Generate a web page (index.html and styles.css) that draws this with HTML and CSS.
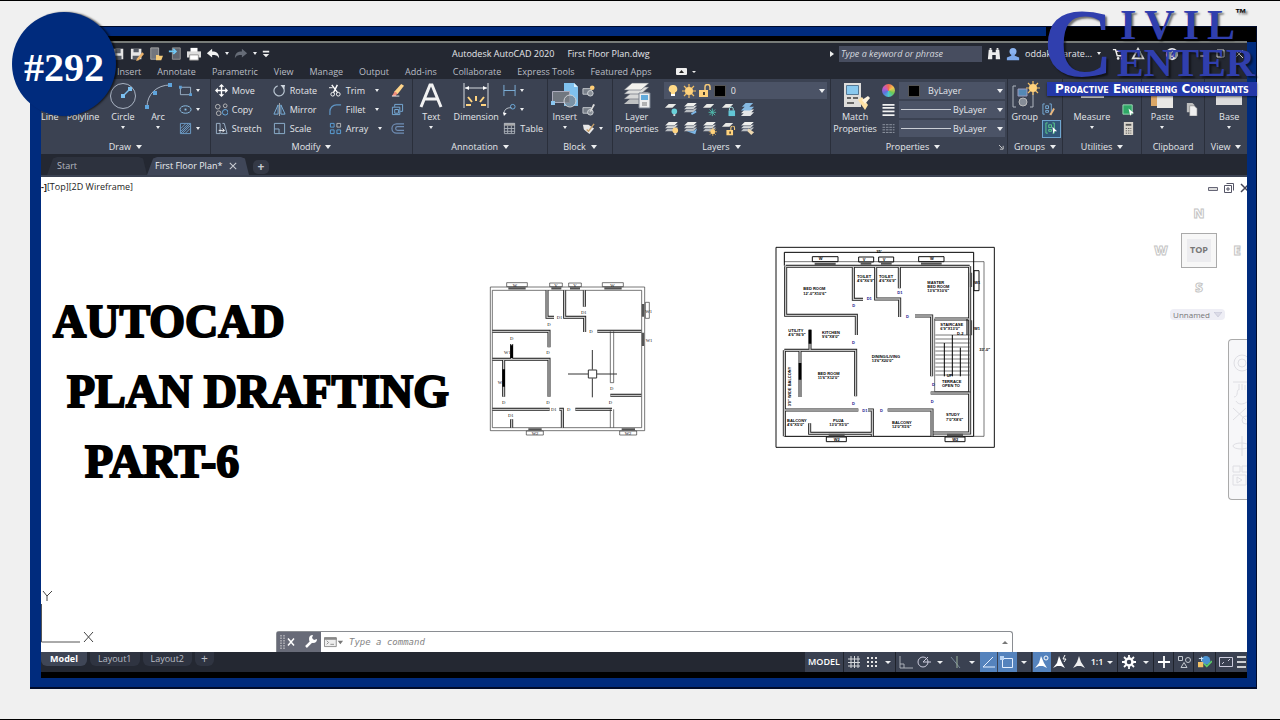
FILE: index.html
```html
<!DOCTYPE html>
<html lang="en">
<head>
<meta charset="utf-8">
<title>AutoCAD Plan Drafting Part-6</title>
<link rel="stylesheet" href="styles.css">
</head>
<body>
<svg class="defs" aria-hidden="true">
  <symbol id="stack" viewBox="0 0 16 16"><path d="M5 7h10l-4 4H1z" fill="#b9bdc2"/><path d="M5 4h10l-4 4H1z" fill="#d4d6d8"/><path d="M5 1h10l-4 4H1z" fill="#efefec"/><path d="M1 5h10l4-4M1 8h10l4-4" fill="none" stroke="#50586a" stroke-width=".7"/></symbol>
  <symbol id="sheet" viewBox="0 0 16 16"><path d="M5 2h8L9 6H1z" fill="#e9e9e6"/></symbol>
  <symbol id="bulb" viewBox="0 0 12 14"><path d="M6 1a4 4 0 0 0-2 7.600V10h4V8.600A4 4 0 0 0 6 1z" fill="#ffd987"/><path d="M4 10h4v2H4z" fill="#fff"/></symbol>
  <symbol id="sun" viewBox="0 0 14 14"><path d="M7 0v14M0 7h14M2 2l10 10M12 2L2 12" stroke="#f3bf65" stroke-width="1.200"/><circle cx="7" cy="7" r="4" fill="#ffd27c"/></symbol>
  <symbol id="lock" viewBox="0 0 14 14"><path d="M7 6V3a2 2 0 0 1 5 0v3" fill="none" stroke="#f3c878" stroke-width="1.500"/><path d="M1 6h9v7H1z" fill="#ffd27c"/><path d="M5 8h2v3H5z" fill="#4a4130"/></symbol>
  <symbol id="insertblk" viewBox="0 0 14 14"><path d="M1 5h9v6H1z" fill="#777e88" stroke="#c7cbd0"/><circle cx="9" cy="10" r="3" fill="#8a9098" stroke="#d5d8db"/></symbol>
  <defs>
    <path id="wa" d="M201 61V142H222M254 61V142H314V186M313 61V110M37 184H207V232M352 184H484M391 376H484M37 268H207V380M71 268V380M95 222V268M37 418H209M238 418H247V473M286 418H396M95 448V473"/>
    <path id="wb" d="M62 94H614M62 94V241H274V300M265 94V193H294M332 94V192H404V246M403 94V160M450 243H500V424M614 94V470M58 346H272V484M58 346V604M105 346V486M135 284V346M58 525H280M309 525H322V604M368 525H501V604M134 565V595H320M497 474H614V594H505M509 252H614"/>
  </defs>
</svg>

<main class="frame">
  <div class="app">
    <header class="titlebar">
      <div class="quick">
        <button class="ib" aria-label="Save"><svg viewBox="0 0 16 16"><path d="M2 2h12v12H2z" fill="#e6e6e6"/><path d="M5 2h6v5H5zM4 10h8v4H4z" fill="#555b66"/></svg></button>
        <button class="ib" aria-label="Save As"><svg viewBox="0 0 16 16"><path d="M1 2h12v12H1z" fill="#e6e6e6"/><path d="M4 2h6v4H4zM3 10h8v4H3z" fill="#555b66"/><path d="M14 6l2 2-6 7-3 1 1-3z" fill="#e9b26b"/></svg></button>
        <button class="ib" aria-label="Open from web"><svg viewBox="0 0 16 16"><path d="M2 1h9v13H2z" fill="#71757d" stroke="#aaa"/><path d="M8 9h3l1 1h4l-2 5H8z" fill="#f5cb78"/></svg></button>
        <button class="ib" aria-label="Save to web"><svg viewBox="0 0 16 16"><path d="M5 1h9v13H5z" fill="#60646d" stroke="#999"/><path d="M1 5h7M6 2l3 3-3 3" fill="none" stroke="#70c8f5" stroke-width="2"/></svg></button>
        <button class="ib" aria-label="Plot"><svg viewBox="0 0 16 16"><path d="M4 1h8v5H4z" fill="#fff"/><path d="M0 5h16v7H0z" fill="#ddd"/><path d="M3 9h10v6H3z" fill="#fff" stroke="#888"/></svg></button>
        <button class="ib" aria-label="Undo"><svg viewBox="0 0 16 16"><path d="M7 2v3c5 0 8 2 8 8-2-4-4-4-8-4v3L1 7z" fill="#f2f2f2"/></svg></button><i class="caret"></i>
        <button class="ib" aria-label="Redo"><svg viewBox="0 0 16 16"><path d="M9 2v3C4 5 1 7 1 13c2-4 4-4 8-4v3l6-5z" fill="#666c77"/></svg></button><i class="caret"></i>
        <button class="ib sm" aria-label="Customize"><svg viewBox="0 0 10 10"><path d="M1 1h8v2H1zM1 5h8L5 9z" fill="#eee"/></svg></button>
      </div>
      <div class="doc-title"><span>Autodesk AutoCAD 2020</span><span>First Floor Plan.dwg</span></div>
      <div class="title-right">
        <i class="caret side"></i>
        <input class="search" type="text" aria-label="Search" placeholder="Type a keyword or phrase">
        <svg class="i14" viewBox="0 0 16 16"><path d="M2 3h4v3h4V3h4l1 11h-5V9H6v5H1z" fill="#eee"/><path d="M3 1h2v2H3zM11 1h2v2h-2z" fill="#eee"/></svg>
        <svg class="i14" viewBox="0 0 16 16"><circle cx="8" cy="5" r="4" fill="#8cb4f0"/><path d="M6 7h4v3l5 2v3H1v-3l5-2z" fill="#7ea9ea"/></svg>
        <span>oddakottarate...</span><i class="caret"></i>
        <svg class="i14 wide" viewBox="0 0 16 16"><path d="M1 3h3l2 7h7l2-5H5" fill="none" stroke="#eee" stroke-width="1.700"/><circle cx="7" cy="13" r="1.500" fill="#eee"/><circle cx="12" cy="13" r="1.500" fill="#eee"/></svg>
        <svg class="i14" viewBox="0 0 16 16"><path d="M8 2l6 11H2z" fill="none" stroke="#ddd" stroke-width="2"/></svg><i class="caret"></i>
        <svg class="i14 wide" viewBox="0 0 16 16"><circle cx="8" cy="8" r="7" fill="#eee"/><path d="M6 6c0-3 5-3 4 0-1 2-2 1-2 4M8 11v2" stroke="#3948a8" stroke-width="2" fill="none"/></svg>
        <span class="winbtns"><svg viewBox="0 0 48 12"><path d="M1 8h9M18 2h7v7h-7zM36 2l8 8M44 2l-8 8" fill="none" stroke="#ccc"/></svg></span>
      </div>
    </header>

    <nav class="menu">
      <a href="#">Insert</a><a href="#">Annotate</a><a href="#">Parametric</a><a href="#">View</a><a href="#">Manage</a><a href="#">Output</a><a href="#">Add-ins</a><a href="#">Collaborate</a><a href="#">Express Tools</a><a href="#">Featured Apps</a>
      <button class="mini" aria-label="Minimize ribbon"><svg viewBox="0 0 20 8"><rect width="11" height="7" rx="1" fill="#eee"/><path d="M3 5h5L5.500 2z" fill="#222"/><path d="M16 3h4l-2 2z" fill="#eee"/></svg></button>
    </nav>

    <section class="ribbon" aria-label="Ribbon">
      <div class="panel p-draw">
        <div class="body">
          <button class="big"><svg class="ico"></svg>Line</button>
          <button class="big"><svg class="ico"></svg>Polyline</button>
          <button class="big"><svg class="ico" viewBox="0 0 30 30"><circle cx="15" cy="15" r="12.500" fill="none" stroke="#a9b3c2"/><path d="M15 15l7-7" stroke="#7cc0f0" stroke-width="1.500"/><path d="M13 13h4v4h-4zM20 6h4v4h-4z" fill="#7cc0f0"/></svg>Circle<i class="caret"></i></button>
          <button class="big"><svg class="ico" viewBox="0 0 30 30"><path d="M4 26C4 13 14 4 27 4" fill="none" stroke="#a9b3c2"/><path d="M2 24h4v4H2zM10 10h4v4h-4zM25 2h4v4h-4z" fill="#5fa4dc"/></svg>Arc<i class="caret"></i></button>
          <div class="rows">
            <button class="tool" aria-label="Rectangle"><svg viewBox="0 0 14 14"><path d="M1.500 3.500h11v8h-11z" fill="none" stroke="#9fb6cc"/><path d="M0 2h3v3H0zM11 10h3v3h-3z" fill="#5c9ed4"/></svg><i class="caret"></i></button>
            <button class="tool" aria-label="Ellipse"><svg viewBox="0 0 14 14"><ellipse cx="7" cy="7" rx="6" ry="4" fill="none" stroke="#8fc4ea"/><path d="M6 6h2v2H6z" fill="#8fc4ea"/></svg><i class="caret"></i></button>
            <button class="tool" aria-label="Hatch"><svg viewBox="0 0 14 14"><path d="M1.500 1.500h11v11h-11zM2 7l5-5M2 12L12 2M7 12l5-5M2 10l8-8M4 12l8-8" fill="none" stroke="#6fa0cc"/></svg><i class="caret"></i></button>
          </div>
        </div>
        <button class="ptitle">Draw <i class="caret lg"></i></button>
      </div>

      <div class="panel p-modify">
        <div class="body">
          <div class="rows">
            <button class="tool"><svg viewBox="0 0 14 14"><path d="M7 1v12M1 7h12" stroke="#fff" stroke-width="1.500"/><path d="M7 0l3 3H4zM7 14l3-3H4zM0 7l3-3v6zM14 7l-3-3v6z" fill="#fff"/></svg>Move</button>
            <button class="tool"><svg viewBox="0 0 14 14"><g fill="none"><circle cx="3" cy="4" r="2.500" stroke="#bbb"/><circle cx="4" cy="11" r="2.500" stroke="#bbb"/><circle cx="11" cy="3" r="2" stroke="#bbb"/><circle cx="11" cy="10" r="3" stroke="#69b0e6"/></g></svg>Copy</button>
            <button class="tool"><svg viewBox="0 0 14 14"><path d="M1.500 1.500h4v11h-4zM8 1.500h2l3 11H6" fill="none" stroke="#9fb6cc"/><path d="M4 9h6M8 7l2 2-2 2" stroke="#fff" fill="none"/></svg>Stretch</button>
          </div>
          <div class="rows">
            <button class="tool"><svg viewBox="0 0 14 14"><path d="M5 2a5.500 5.500 0 1 0 6 2" fill="none" stroke="#b8c4d0" stroke-width="1.300"/><path d="M8 1l5 0-1 5z" fill="#cfd6de"/></svg>Rotate</button>
            <button class="tool"><svg viewBox="0 0 14 14"><path d="M5.500 2v10H1zM8.500 2v10H13z" fill="none" stroke="#7db4e0"/><path d="M7 0v14" stroke="#aaa"/></svg>Mirror</button>
            <button class="tool"><svg viewBox="0 0 14 14"><path d="M1.500 1.500h11v11h-11zM1.500 7.500h5v5" fill="none" stroke="#8fb2d0"/></svg>Scale</button>
          </div>
          <div class="rows">
            <button class="tool"><svg viewBox="0 0 14 14"><path d="M3 1l6 8M9 1L5 9" stroke="#fff" stroke-width="1.500"/><circle cx="4" cy="11" r="2" stroke="#fff" fill="none"/><circle cx="10" cy="11" r="2" stroke="#fff" fill="none"/><path d="M0 4h4" stroke="#fff"/></svg>Trim<i class="caret push"></i></button>
            <button class="tool"><svg viewBox="0 0 14 14"><path d="M1 13V9a7 7 0 0 1 7-7h5" fill="none" stroke="#5f95c4" stroke-width="1.300"/></svg>Fillet<i class="caret push"></i></button>
            <button class="tool"><svg viewBox="0 0 14 14"><path d="M1.500 1.500h4v4h-4zM1.500 8.500h4v4h-4zM8.500 8.500h4v4h-4z" fill="none" stroke="#5da3dc"/><path d="M8.500 1.500h4v4h-4z" fill="none" stroke="#bbb"/></svg>Array<i class="caret push"></i></button>
          </div>
          <div class="rows">
            <button class="tool" aria-label="Erase"><svg viewBox="0 0 14 14"><path d="M11 0l3 2-7 9-4-2z" fill="#ffd58b"/><path d="M4 8l3 2-2 3H1z" fill="#ef8c7c"/><path d="M1 13h8" stroke="#eee"/></svg></button>
            <button class="tool" aria-label="Explode"><svg viewBox="0 0 14 14"><path d="M1.500 4.500h8v8h-8zM4 4V1.500h8.500V9H10M4 7h4v4H4z" fill="none" stroke="#78addb"/></svg></button>
            <button class="tool" aria-label="Offset"><svg viewBox="0 0 14 14"><path d="M14 2H6a5 5 0 0 0 0 10h8M14 5H7a2 2 0 0 0 0 4h7" fill="none" stroke="#6f8db4" stroke-width="1.300"/></svg></button>
          </div>
        </div>
        <button class="ptitle">Modify <i class="caret lg"></i></button>
      </div>

      <div class="panel p-annot">
        <div class="body">
          <button class="big"><svg class="ico" viewBox="0 0 30 30"><path d="M5 26l9-22h2l9 22M9 18h12" fill="none" stroke="#f2f2f2" stroke-width="3"/></svg>Text<i class="caret"></i></button>
          <button class="big"><svg class="ico" viewBox="0 0 30 30"><path d="M3 2v25M27 2v25M4 7h22" stroke="#d5d9de" fill="none"/><path d="M4 7l4-2v4zM26 7l-4-2v4z" fill="#fff"/><path d="M15 20v-5M11 21l-4-5M19 21l4-5M10 24H5M20 24h5" stroke="#ffd480" stroke-width="2"/></svg>Dimension</button>
          <div class="rows">
            <button class="tool" aria-label="Linear"><svg viewBox="0 0 14 14"><path d="M1 1v12M13 1v12M1 7h12" stroke="#7fb4df" fill="none"/></svg><i class="caret"></i></button>
            <button class="tool" aria-label="Leader"><svg viewBox="0 0 14 14"><path d="M1 12c0-5 3-7 8-7" stroke="#c4cbd3" fill="none"/><circle cx="10.500" cy="4" r="2.500" stroke="#6eaee0" fill="none"/><path d="M0 10l1 4 3-3z" fill="#fff"/></svg><i class="caret"></i></button>
            <button class="tool"><svg viewBox="0 0 14 14"><path d="M1 1h12v3H1z" fill="#aaa"/><path d="M1.500 1.500h11v11h-11zM5 4v8M9 4v8M1 7h12M1 10h12" stroke="#aab0b8" fill="none"/></svg>Table</button>
          </div>
        </div>
        <button class="ptitle">Annotation <i class="caret lg"></i></button>
      </div>

      <div class="panel p-block">
        <div class="body">
          <button class="big"><svg class="ico" viewBox="0 0 30 30"><path d="M14 2h10l4 4v19H14z" fill="#7fc1ee"/><path d="M24 2v4h4z" fill="#d7effd"/><path d="M2.500 10.500h17v11h-17z" fill="#717780" stroke="#aab"/><circle cx="20" cy="20" r="6" fill="#777d86b0" stroke="#d0d4d8"/><path d="M1 20h4v4H1z" fill="#8cc7f0"/></svg>Insert<i class="caret"></i></button>
          <div class="rows">
            <button class="tool" aria-label="Create block"><svg viewBox="0 0 14 14"><use href="#insertblk"/><circle cx="11" cy="4" r="2.500" fill="#ffce77"/></svg></button>
            <button class="tool" aria-label="Edit block"><svg viewBox="0 0 14 14"><use href="#insertblk"/><path d="M12 1l2 1-4 7-2 1z" fill="#ddd"/></svg></button>
            <button class="tool" aria-label="Edit attributes"><svg viewBox="0 0 14 14"><path d="M1 3h6l6 4-5 6-6-5z" fill="#e8e8e8"/><path d="M5 8l2 2 6-8" stroke="#c79f68" stroke-width="1.500" fill="none"/></svg><i class="caret"></i></button>
          </div>
        </div>
        <button class="ptitle">Block <i class="caret lg"></i></button>
      </div>

      <div class="panel p-layers">
        <div class="body">
          <button class="big"><svg class="ico" viewBox="0 0 30 30"><path d="M10 16h17l-8 7H2z" fill="#bfc1c2"/><path d="M10 11h17l-8 7H2z" fill="#d7d8d8" stroke="#59606c" stroke-width=".6"/><path d="M10 6h17l-8 7H2z" fill="#dedfde" stroke="#59606c" stroke-width=".6"/><path d="M10 2h17l-8 7H2z" fill="#f3f2ee" stroke="#59606c" stroke-width=".6"/><path d="M17 12h11v15H17z" fill="#eee" stroke="#78808d"/><path d="M19 14h7v5h-7z" fill="#63abdc"/><path d="M20 22h5M20 24h5" stroke="#777"/></svg>Layer<br>Properties</button>
          <div class="rows">
            <div class="combo"><svg class="i14" viewBox="0 0 12 14"><use href="#bulb"/></svg><svg class="i14" viewBox="0 0 14 14"><use href="#sun"/></svg><svg class="i14" viewBox="0 0 14 14"><use href="#lock"/></svg><i class="swatch"></i><select aria-label="Layer"><option>0</option></select><i class="caret lg"></i></div>
            <div class="icons">
              <svg viewBox="0 0 16 16"><use href="#sheet"/><circle cx="11" cy="10" r="3" fill="#6ad1d9"/><path d="M10 13h2v2h-2z" fill="#ddd"/></svg>
              <svg viewBox="0 0 16 16"><use href="#stack"/><path d="M9 13l5-3" stroke="#7db8e8" stroke-width="2"/></svg>
              <svg viewBox="0 0 16 16"><use href="#sheet"/><path d="M11 7v8M7 11h8M8 8l6 6M14 8l-6 6" stroke="#4fb7ab"/></svg>
              <svg viewBox="0 0 16 16"><use href="#sheet"/><path d="M8 9h7v6H8z" fill="#62c6d6"/><path d="M9 9V7c0-2 4-2 4 0v2" stroke="#aee" fill="none"/></svg>
              <svg viewBox="0 0 16 16"><path d="M5 8h10l-4 4H1zM5 11h10l-4 4H1z" fill="#e4e5e6"/><path d="M6 1h8l-4 4H2zM5 5h10l-4 4H1z" fill="#86b9e2"/></svg>
            </div>
            <div class="icons">
              <svg viewBox="0 0 16 16"><use href="#stack"/><circle cx="12" cy="10" r="3" fill="#ffd480"/><path d="M11 13h2v2h-2z" fill="#ddd"/></svg>
              <svg viewBox="0 0 16 16"><use href="#stack"/><path d="M4 11h7l4-3-2 6z" fill="#7db8e8"/></svg>
              <svg viewBox="0 0 16 16"><use href="#stack"/><use href="#sun" x="7" y="7" width="9" height="9"/></svg>
              <svg viewBox="0 0 16 16"><use href="#sheet"/><use href="#lock" x="5" y="5" width="11" height="11"/></svg>
              <svg viewBox="0 0 16 16"><use href="#stack"/><path d="M9 8l6 4-3 3-4-4z" fill="#ecd7b0"/></svg>
            </div>
          </div>
        </div>
        <button class="ptitle">Layers <i class="caret lg"></i></button>
      </div>

      <div class="panel p-props">
        <div class="body">
          <button class="big"><svg class="ico" viewBox="0 0 30 30"><path d="M4 2h17v24H4z" fill="#dedddb"/><path d="M6.500 4.500h12v9h-12z" fill="#89c9ef" stroke="#557996"/><path d="M7 17h4M7 22h7M13 17h5" stroke="#666" stroke-width="2"/><path d="M18 19l4-3 6 8-3 5z" fill="#ffe2a5"/><path d="M22 19l6-4 2 2-5 6z" fill="#fff4df"/></svg>Match<br>Properties</button>
          <div class="rows prop-icons">
            <i class="wheel"></i>
            <svg viewBox="0 0 14 14"><path d="M0 1h14M0 4.500h14M0 8.500h14M0 13h14" stroke="#f0f0f0" stroke-width="2"/></svg>
            <svg viewBox="0 0 14 14"><path d="M0 2h14M0 5h14M0 8h14M0 11h14" stroke="#9ca3ae" stroke-dasharray="3 1"/></svg>
          </div>
          <div class="rows combos">
            <div class="combo"><i class="swatch"></i><select aria-label="Object color"><option>ByLayer</option></select><i class="caret lg"></i></div>
            <div class="combo"><i class="rule"></i><select aria-label="Lineweight"><option>ByLayer</option></select><i class="caret lg"></i></div>
            <div class="combo"><i class="rule"></i><select aria-label="Linetype"><option>ByLayer</option></select><i class="caret lg"></i></div>
          </div>
        </div>
        <button class="ptitle shifted">Properties <i class="caret lg"></i><svg class="launch" viewBox="0 0 6 6"><path d="M0 0l4 4M5 1v4H1" stroke="#ddd" fill="none"/></svg></button>
      </div>

      <div class="panel p-groups">
        <div class="body">
          <button class="big"><svg class="ico" viewBox="0 0 30 30"><path d="M6 5H3v21h3M20 5h3v21h-3" fill="none" stroke="#aeb4bd"/><path d="M8 8h9v7H8z" fill="#5489b5" stroke="#99b"/><circle cx="13" cy="21" r="4" fill="#858c96" stroke="#bbb"/><use href="#sun" x="16" y="0" width="14" height="14"/></svg>Group</button>
          <div class="rows">
            <button class="tool" aria-label="Ungroup"></button>
            <button class="tool" aria-label="Group edit"><svg viewBox="0 0 14 14"><path d="M3 1H1v11h2M8 1h2v11H8M4 3h3v3H4zM4 8h3v2H4z" fill="none" stroke="#7ab0dc"/><path d="M13 6l-4 7" stroke="#eab87e" stroke-width="2"/></svg></button>
            <button class="tool on" aria-label="Group selection"><svg viewBox="0 0 14 14"><path d="M3 1H1v11h2M8 1h2v11H8M4 3h3v3H4zM4 8h3v2H4z" fill="none" stroke="#5fd08e"/><path d="M8 5l5 5-3 0-1 3z" fill="#fff"/></svg></button>
          </div>
        </div>
        <button class="ptitle">Groups <i class="caret lg"></i></button>
      </div>

      <div class="panel p-utils">
        <div class="body">
          <button class="big"><svg class="ico" viewBox="0 0 30 30"><path d="M4 8h23v9H4z" fill="#d6d6d6"/></svg>Measure<i class="caret"></i></button>
          <div class="rows">
            <button class="tool" aria-label="Quick select"></button>
            <button class="tool" aria-label="Select all"><svg viewBox="0 0 14 14"><path d="M1 2h10v10H1z" fill="#2fa866" stroke="#9fe0b8"/><path d="M7 6l6 5-3 0-1 3z" fill="#fff"/></svg></button>
            <button class="tool" aria-label="Calculator"><svg viewBox="0 0 14 14"><path d="M2 0h10v14H2z" fill="#d8d4cc"/><path d="M4 2h6v2H4z" fill="#555"/><path d="M4 7h6M4 9.500h6M4 12h6" stroke="#555" stroke-dasharray="1.500 1"/></svg></button>
          </div>
        </div>
        <button class="ptitle">Utilities <i class="caret lg"></i></button>
      </div>

      <div class="panel p-clip">
        <div class="body">
          <button class="big"><svg class="ico" viewBox="0 0 30 30"><path d="M4 5h16v20H4z" fill="#dba766"/><path d="M10 12h16v15H10z" fill="#e9e7e4"/></svg>Paste<i class="caret"></i></button>
          <div class="rows">
            <button class="tool" aria-label="Cut"></button>
            <button class="tool" aria-label="Copy clip"><svg viewBox="0 0 14 14"><path d="M2 0h6l2 2v8H2z" fill="#bdbdbd"/><path d="M5 3h5l3 3v8H5z" fill="#f0f0f0" stroke="#777" stroke-width=".6"/></svg></button>
          </div>
        </div>
        <span class="ptitle">Clipboard</span>
      </div>

      <div class="panel p-view">
        <div class="body"><button class="big"><svg class="ico" viewBox="0 0 30 30"><path d="M2 8h26v16H2z" fill="#dcdcdc"/></svg>Base<i class="caret"></i></button></div>
        <button class="ptitle">View <i class="caret lg"></i></button>
      </div>
    </section>

    <nav class="files">
      <a class="file" href="#">Start</a>
      <a class="file active" href="#">First Floor Plan* <svg viewBox="0 0 10 10"><path d="M1 1l8 8M9 1L1 9" stroke="#c9ccd2" stroke-width="1.300"/></svg></a>
      <button class="plus" aria-label="New tab">+</button>
    </nav>

    <section class="canvas">
      <div class="viewlabel"><b>-]</b>[Top][2D Wireframe]</div>
      <h1 class="heading"><span>AUTOCAD</span><span>PLAN DRAFTING</span><span>PART-6</span></h1>

      <svg class="plan plan-a" viewBox="0 0 540 525" role="img" aria-label="Plan outline with crosshair">
        <path d="M31 51H494V482H31zM37 61H485V473H37z" class="ln"/>
        <use href="#wa" class="wall"/><use href="#wa" class="core"/>
        <path d="M391 184V338H401V184M391 418V473M401 418V473" class="ln"/>
        <path d="M80 38h62v12H80zM209 39h38v11h-38zM266 39h38v11h-38zM367 38h63v12h-63zM496 97h12v48h-12zM139 483h51v12h-51zM419 483h51v12h-51z" class="ln"/>
        <path d="M85 55h52M214 55h30M270 55h30M373 55h52M489 102v38M489 188v40M145 478h40M425 478h40" class="glass"/>
        <path d="M71 298v52M95 226v38" class="dark"/>
        <path d="M264 312h60M351 312h60M337 240v59M337 325v57" class="cross"/><path d="M325 300h25v24h-25z" class="ln box"/>
        <g class="tag"><text x="98" y="50">W</text><text x="223" y="50">V</text><text x="280" y="50">V</text><text x="391" y="50">W</text><text x="496" y="130">W1</text><text x="497" y="215">W1</text><text x="155" y="495">W2</text><text x="434" y="495">W2</text><text x="202" y="168">D</text><text x="230" y="148">D1</text><text x="303" y="131">D1</text><text x="328" y="190">D</text><text x="90" y="211">D</text><text x="72" y="252">W1</text><text x="199" y="251">D</text><text x="53" y="341">W</text><text x="66" y="403">D</text><text x="199" y="403">D</text><text x="390" y="360">D</text><text x="386" y="403">D</text><text x="261" y="424">D</text><text x="213" y="424">D1</text><text x="84" y="441">D1</text></g>
      </svg>

      <svg class="plan plan-b" viewBox="0 0 720 660" role="img" aria-label="Dimensioned first floor plan">
        <path d="M33 37H688V637H33z" class="edge"/>
        <path d="M58 80H657V604H626" class="ln"/>
        <path d="M58 92V52H626V604H58" class="dark2"/>
        <use href="#wb" class="wall"/><use href="#wb" class="core"/>
        <path d="M509 252V470H614M511 300H614M511 312H614M511 324H614M511 336H614M511 348H614M511 360H614M511 372H614M511 384H614M511 396H614M511 408H614M511 420H614" class="ln"/>
        <path d="M538 324v100M562 300v124M586 338v86M606 252v48" class="dark2"/>
        <path d="M142 65h77v15h-77zM281 66h45v15h-45zM341 66h45v15h-45zM461 65h76v15h-76zM627 107h15v60h-15zM184 606h60v14h-60zM540 606h60v14h-60z" class="edge"/>
        <path d="M149 87h63M287 86h32M348 86h32M468 86h62M618 113v43M618 256v45M191 600h48M546 600h48" class="glass"/>
        <path d="M105 384v50M135 284v42" class="dark"/>
        <g class="room"><text x="115" y="166">BED ROOM</text><text x="115" y="179">12'-0"X10'6"</text><text x="276" y="129">TOILET</text><text x="276" y="141">4'6"X6'9"</text><text x="342" y="129">TOILET</text><text x="342" y="141">4'6"X6'9"</text><text x="487" y="147">MASTER</text><text x="487" y="160">BED ROOM</text><text x="487" y="172">13'6"X10'6"</text><text x="70" y="291">UTILITY</text><text x="70" y="304">4'6"X6'9"</text><text x="171" y="296">KITCHEN</text><text x="171" y="308">9'6"X8'0"</text><text x="526" y="274">STAIRCASE</text><text x="526" y="286">6'9"X13'0"</text><text x="320" y="369">DINING/LIVING</text><text x="320" y="382">13'6"X20'0"</text><text x="158" y="419">BED ROOM</text><text x="158" y="433">11'6"X12'0"</text><text x="543" y="544">STUDY</text><text x="543" y="557">7'0"X8'6"</text><text x="531" y="444">TERRACE</text><text x="531" y="456">OPEN TO</text><text x="66" y="560">BALCONY</text><text x="66" y="573">4'6"X5'0"</text><text x="204" y="560">PUJA</text><text x="193" y="573">13'0"X5'0"</text><text x="381" y="567">BALCONY</text><text x="381" y="580">12'0"X5'6"</text><text x="643" y="347">33'-0"</text><text x="334" y="54">35'</text><text transform="translate(78 514) rotate(-90)">3'0" WIDE BALCONY</text><text x="161" y="76">W</text><text x="293" y="77">V</text><text x="353" y="77">V</text><text x="495" y="76">W</text><text x="628" y="147">W1</text><text x="627" y="286">W1</text><text x="206" y="618">W2</text><text x="562" y="618">W2</text><text x="576" y="299">D-2</text><text x="545" y="425">UP</text></g>
        <g class="door"><text x="262" y="215">D</text><text x="305" y="195">D1</text><text x="397" y="177">D1</text><text x="423" y="248">D</text><text x="261" y="328">D</text><text x="261" y="510">D</text><text x="501" y="453">D</text><text x="497" y="503">D</text><text x="292" y="530">D1</text><text x="345" y="531">D</text></g>
      </svg>

      <svg class="winctl" viewBox="0 0 40 12"><path d="M1.500 5.500h9v3h-9z" fill="#ddd" stroke="#667"/><path d="M19.500 1.500h7v7M17.500 3.500h7v7h-7zM20 6h2v2h-2z" fill="none" stroke="#556"/><path d="M34 2l8 8M42 2l-8 8" stroke="#445" stroke-width="1.500"/></svg>
      <div class="cube"><b class="n">N</b><b class="w">W</b><button>TOP</button><b class="e">E</b><b class="s">S</b></div>
      <button class="ucs-name">Unnamed <svg viewBox="0 0 8 5"><path d="M0 0h8L4 5z" fill="#dcdce8" stroke="#bbc" stroke-width=".5"/></svg></button>
      <div class="navbar"><svg viewBox="0 0 20 162"><g fill="none" stroke="#dedee3"><circle cx="13" cy="23" r="8"/><circle cx="13" cy="23" r="4"/><path d="M4 42h16M5 57c5 0 2-9 5-7v-6M13 44v6M16 45v5M7 61c2 4 8 4 12 0M4 68l13 12M17 68L4 80"/><circle cx="17" cy="80" r="4"/><ellipse cx="12" cy="106" rx="8" ry="3"/><path d="M13 96v20M4 126h7v6H4zM13 126h7v6h-7zM4 135h13v10H4zM8 137l5 3-5 3z"/></g></svg></div>
      <svg class="ucs" viewBox="0 0 54 54"><path d="M.5 15V53H39" fill="none" stroke="#555"/><path d="M2 2l4 5 5-5M6 7v5M43 43l9 10M52 43l-9 10" fill="none" stroke="#444"/></svg>

      <form class="command">
        <span class="grip"><svg viewBox="0 0 44 20"><path d="M4 3v14M7 3v14" stroke="#ddd" stroke-dasharray="1.500 1"/><path d="M11 6.500l6 7M17 6.500l-6 7" stroke="#fff" stroke-width="1.500"/><path d="M29 15l7-7" stroke="#fff" stroke-width="2.500"/><path d="M40 7a4 4 0 1 1-4-4l-1 3 2 2z" fill="#fff"/></svg></span>
        <svg class="prompt" viewBox="0 0 22 14"><path d="M.5 1.500h13v10H.5z" fill="#eee" stroke="#888"/><path d="M0 3h14" stroke="#888" stroke-width="2"/><path d="M3 5l2 2-2 2M7 9h4" stroke="#888" fill="none"/><path d="M15 5h6l-3 4z" fill="#777"/></svg>
        <input type="text" aria-label="Command" placeholder="Type a command">
        <i class="up"></i>
      </form>
    </section>

    <footer class="status">
      <nav class="layouts"><a class="cur" href="#">Model</a><a href="#">Layout1</a><a href="#">Layout2</a><button aria-label="New layout">+</button></nav>
      <div class="cells">
        <button class="w38">MODEL</button>
        <button class="w20 gap" aria-label="Grid"><svg viewBox="0 0 14 14"><path d="M4 1v12M7.500 1v12M11 1v12M1 4h12M1 7.500h12M1 11h12" stroke="#d5d8dc"/></svg></button>
        <button class="w18" aria-label="Snap"><svg viewBox="0 0 14 14"><path d="M2 3h12M2 7h12M2 11h12" stroke="#e5e5e5" stroke-width="2" stroke-dasharray="2 2"/></svg></button>
        <i class="caret"></i>
        <button class="w20 gap" aria-label="Ortho"><svg viewBox="0 0 14 14"><path d="M1 1v12h13M1 9h4v4" stroke="#aab0b8" fill="none"/></svg></button>
        <button class="w18" aria-label="Polar"><svg viewBox="0 0 14 14"><circle cx="6" cy="7" r="5" stroke="#ccd" fill="none"/><path d="M6 7h8M6 7l5-5" stroke="#ccd"/></svg></button>
        <i class="caret"></i>
        <button class="w18" aria-label="Isodraft"><svg viewBox="0 0 14 14"><path d="M2 2l9 11" stroke="#789"/><path d="M8 1v12" stroke="#9cb49c"/></svg></button>
        <i class="caret"></i>
        <button class="w18 on" aria-label="Object snap tracking"><svg viewBox="0 0 14 14"><path d="M12 2L2 12h12" stroke="#e4efff" fill="none"/></svg></button>
        <button class="w20 on" aria-label="Object snap"><svg viewBox="0 0 14 14"><path d="M2.500 3.500h10v9h-10z" stroke="#e4efff" fill="none"/><path d="M0 1h4v4H0z" fill="#b9d4f4"/></svg></button>
        <i class="caret"></i>
        <button class="w20 on gap" aria-label="Annotation visibility"><svg viewBox="0 0 14 14"><path d="M6 1l3 7 3 5-4-2H4l-4 2 4-5z" fill="#fff"/><circle cx="11" cy="3" r="2" stroke="#fff" fill="none"/></svg></button>
        <button class="w18" aria-label="Auto scale"><svg viewBox="0 0 14 14"><path d="M6 1l3 7 3 5-4-2H4l-4 2 4-5z" fill="#fff"/><path d="M12 0l-2 4h3l-2 3" stroke="#fff" fill="none"/></svg></button>
        <button class="w20" aria-label="Annotation scale"><svg viewBox="0 0 14 14"><path d="M7 1l2 6 4 6-4-2H5l-4 2 4-6z" fill="#eee"/></svg></button>
        <button class="w12 ratio">1:1</button><i class="caret"></i>
        <button class="w22 gap" aria-label="Workspace"><svg viewBox="0 0 14 14"><circle cx="7" cy="7" r="3.500" fill="none" stroke="#fff" stroke-width="2.500"/><path d="M7 0v3M7 11v3M0 7h3M11 7h3M2 2l2 2M10 10l2 2M12 2l-2 2M2 12l2-2" stroke="#fff" stroke-width="1.800"/></svg></button>
        <i class="caret"></i>
        <button class="w20 gap" aria-label="Monitor"><svg viewBox="0 0 14 14"><path d="M7 1v12M1 7h12" stroke="#fff" stroke-width="1.800"/></svg></button>
        <button class="w20 gap" aria-label="Isolate"><svg viewBox="0 0 14 14"><path d="M1.500 1.500h4v4h-4zM7 7.500l3 5H4z" fill="none" stroke="#c3c8ce"/><circle cx="11" cy="5" r="2.500" fill="none" stroke="#c3c8ce"/></svg></button>
        <button class="w22 gap" aria-label="Hardware"><svg viewBox="0 0 16 14"><circle cx="9" cy="5" r="5" fill="#4b93d2"/><path d="M0 7h6v6H0z" fill="#f2c266"/><path d="M7 9l3 3 6-6" stroke="#5bcf6a" stroke-width="2" fill="none"/><path d="M4 1v5M1 3h5" stroke="#d7edff"/></svg></button>
        <button class="w20 gap" aria-label="Clean screen"><svg viewBox="0 0 14 14"><path d="M.5 2.500h13v9H.5zM3 9l2-2M9 6l2-2" fill="none" stroke="#ccd"/></svg></button>
        <button class="w12" aria-label="Customization"><svg viewBox="0 0 10 14"><path d="M1 2h9M1 7h9M1 12h9" stroke="#fff" stroke-width="1.500"/></svg></button>
      </div>
    </footer>
  </div>
</main>

<div class="badge">#292</div>
<div class="logo">
  <div class="logo-top"><span class="logo-c">C</span>
    <div class="logo-words"><div class="ivil"><span>I</span><span>V</span><span>I</span><span>L</span><sup>™</sup></div><div class="enter">ENTER</div></div>
  </div>
  <div class="strap">Proactive Engineering Consultants</div>
</div>
</body>
</html>
```
FILE: styles.css
```css
*{box-sizing:border-box}
body{margin:0;min-height:100vh;display:flex;flex-direction:column;position:relative;background:#f0f0f0;border-top:1px solid #000;border-bottom:1px solid #000;font:9px/12px "Open Sans","Noto Sans",sans-serif;color:#e4e6ea;overflow-x:hidden}
button,input,select{font:inherit;color:inherit;background:none;border:0;padding:0;margin:0;border-radius:0}
a{color:inherit;text-decoration:none}
svg{display:block;flex:none}
.defs{position:absolute;width:0;height:0}
.frame{flex:1;display:flex;margin:25px 23px 30px 30px;background:linear-gradient(#000,#000) top right/210px 15px no-repeat #002b7d;border:1px solid #000b2b;border-left-width:0;border-bottom-width:2px;padding:9px 9px 9px 11px}
.app{flex:1;min-width:0;display:flex;flex-direction:column;border-top:5px solid #000;border-bottom:6px solid #000;background:#242832;overflow:hidden}
.caret{display:inline-block;flex:none;border:2px solid transparent;border-top:3px solid #eceef0;border-bottom:0}
.caret.lg{border-width:4px 3px 0}
.caret.side{border:3px solid transparent;border-left:4px solid #eee;border-right:0}
.caret.push{margin-left:6px}
.i14{width:14px;height:14px}

.titlebar{display:grid;grid-template-columns:411fr 378fr 417fr;align-items:center;height:23px;border-top:2px solid #777b78}
.quick{display:flex;align-items:center;gap:5px;padding-left:70px}
.ib svg{width:14px;height:14px}
.ib.sm svg{width:8px;height:8px}
.doc-title{display:flex;gap:13px;white-space:nowrap}
.title-right{display:flex;align-items:center;gap:5px;white-space:nowrap;min-width:0}
.search{width:143px;height:16px;background:#474d5f;padding:0 2px;font-style:italic}
.search::placeholder{color:#d5d8de;opacity:1}
.title-right .wide{margin-left:6px}
.winbtns{margin-left:auto}
.winbtns svg{width:48px;height:12px}

.menu{display:flex;align-items:center;gap:16px;height:15px;padding-left:76px;color:#b9bdc5;white-space:nowrap}
.mini{margin-left:9px}
.mini svg{width:20px;height:8px}

.ribbon{display:flex;height:75px;background:#3b4252;overflow:hidden}
.panel{display:flex;flex-direction:column;min-width:0;border-right:1px solid #2a2f3b;white-space:nowrap}
.body{display:grid;height:61px;padding-top:2px}
.p-draw{flex:170 1 0}.p-modify{flex:203 1 0}.p-annot{flex:135 1 0}.p-block{flex:64 1 0}.p-layers{flex:219 1 0}
.p-props{flex:177 1 0}.p-groups{flex:55 1 0}.p-utils{flex:78 1 0}.p-clip{flex:63 1 0}.p-view{flex:42 1 0;border-right:0}
.p-draw .body{grid-template-columns:16px 52px 28px 42px 1fr}
.p-modify .body{grid-template-columns:58px 56px 62px 1fr;padding-left:4px}
.p-annot .body{grid-template-columns:36px 48px 1fr;column-gap:3px}
.p-block .body{grid-template-columns:33px 1fr;column-gap:1px}
.p-layers .body{grid-template-columns:48px 1fr;column-gap:3px;padding-right:3px}
.p-props .body{grid-template-columns:48px 14px 1fr;column-gap:2px;padding-right:2px}
.p-groups .body{grid-template-columns:34px 1fr}
.p-utils .body{grid-template-columns:57px 1fr;column-gap:2px}
.p-clip .body{grid-template-columns:41px 1fr;column-gap:2px}
.p-view .body{grid-template-columns:1fr;padding-left:6px}
.big{display:flex;flex-direction:column;align-items:center;align-self:start;min-width:0;line-height:12px}
.ico{width:30px;height:30px}
.big .caret{margin-top:3px}
.p-draw .big:first-child{align-items:flex-start}
.rows{display:grid;grid-template-rows:repeat(3,19px);align-items:center;min-width:0}
.tool{display:flex;align-items:center;gap:4px;height:18px}
.tool svg{width:13px;height:13px}
.tool.on{background:#31577a;border:1px solid #6fa6d0;width:19px;justify-content:center}
.ptitle{display:flex;align-items:center;justify-content:center;gap:5px;height:14px;width:100%;position:relative}
.ptitle.shifted{padding-right:12px}
.launch{position:absolute;right:3px;width:5px;height:5px}
.combo{display:flex;align-items:center;gap:2px;height:17px;padding:0 2px;background:#4b5366;min-width:0}
.combo select{flex:1;min-width:0;appearance:none;padding-left:3px}
.swatch{width:12px;height:12px;background:#000;border:1px solid #555;flex:none}
.icons{display:flex;gap:4px}
.icons svg{width:15px;height:15px}
.prop-icons{justify-items:center}
.prop-icons svg{width:13px;height:12px}
.wheel{width:13px;height:13px;border-radius:50%;background:conic-gradient(#f06a50,#f4c64f,#69ca56,#4cc7cf,#5b70df,#c559c6,#f06a50)}
.combos .swatch{margin-left:7px}
.combos .combo:first-child select{padding-left:6px}
.combos{padding-left:2px}
.rule{width:50px;height:1px;background:#c9cdd4;flex:none}
.combos .rule+select{padding-left:0}

.files{display:flex;align-items:flex-end;height:23px;padding-left:6px;border-bottom:2px solid #3b4252}
.file{display:flex;align-items:center;justify-content:space-between;width:100px;height:18px;padding:0 10px;background:#2d323e;color:#b4b8c0;clip-path:polygon(0 100%,6% 8%,10% 0,92% 0,96% 8%,100% 100%)}
.file.active{background:#3f4658;color:#eceef1;width:102px;padding:0 12px 0 8px;white-space:nowrap}
.file svg{width:8px;height:8px}
.plus{width:16px;height:14px;margin:0 0 1px 4px;border-radius:5px;background:#343946;color:#c8cbd1;font-size:12px;font-weight:700}

.canvas{position:relative;flex:1;background:#fff;color:#222;overflow:hidden}
.viewlabel{padding:4px 0 0 0;line-height:12px}
.heading{margin:94px 0 0 12px;font:700 46px/70px "Liberation Serif",serif;color:#000;-webkit-text-stroke:2px #000;display:flex;flex-direction:column}
.heading span:nth-child(2){padding-left:14px}
.heading span:nth-child(3){padding-left:32px}
.plan{position:absolute}
.plan-a{left:439px;top:93px;width:180px;height:175px}
.plan-b{left:724px;top:58px;width:240px;height:220px}
.ln{fill:none;stroke:#333;stroke-width:2}
.edge{fill:none;stroke:#111;stroke-width:3}
.box{stroke-width:3}
.wall{fill:none;stroke:#1c1c1c;stroke-width:9}
.core{fill:none;stroke:#c4c4c4;stroke-width:4}
.glass{fill:none;stroke:#555;stroke-width:7}
.dark{stroke:#000;stroke-width:8}
.dark2{fill:none;stroke:#000;stroke-width:3}
.cross{stroke:#333;stroke-width:3}
.tag{font:14px "Liberation Serif",serif;fill:#111}
.room{font:700 12px "Liberation Sans",sans-serif;fill:#000}
.door{font:700 12px "Liberation Sans",sans-serif;fill:#11118c}
.winctl{position:absolute;right:0;top:5px;width:40px;height:12px}
.cube{position:absolute;right:0;top:27px;width:96px;display:grid;grid-template:"a n b" 18px "w t e" 36px "c s d" 18px / 20px 36px 20px;gap:10px;align-items:center;justify-items:center;color:#fff;font:700 13px/18px "Open Sans",sans-serif;-webkit-text-stroke:1px #c4c4c4}
.n{grid-area:n}.w{grid-area:w}.e{grid-area:e}.s{grid-area:s}
.cube button{grid-area:t;width:36px;height:35px;background:#ececef;border:1px solid #aaa;box-shadow:inset 0 0 0 5px #f7f7f7;color:#777;font-size:9px;-webkit-text-stroke:0}
.ucs-name{position:absolute;right:22px;top:132px;height:11px;padding:0 3px;display:flex;align-items:center;gap:4px;border-radius:4px;background:#eeeef5;color:#777;font-size:8px;line-height:11px}
.ucs-name svg{width:8px;height:5px}
.navbar{position:absolute;right:0;top:162px;width:19px;height:161px;border:1px solid #aaa;border-right:0;border-radius:4px 0 0 4px;background:#f7f7f9;overflow:hidden}
.navbar svg{width:20px;height:162px}
.ucs{position:absolute;left:0;bottom:9px;width:54px;height:54px}
.command{position:absolute;left:235px;right:234px;bottom:0;height:21px;display:flex;align-items:center;gap:5px;background:#fff;border:1px solid #8a8d92;border-bottom:0;border-radius:3px 3px 0 0}
.grip{background:#686b78;height:20px}
.grip svg{width:44px;height:20px}
.prompt{width:20px;height:13px;margin-left:-2px}
.command input{flex:1;min-width:0;outline:0;font:italic 9px/12px "DejaVu Sans Mono",monospace}
.command input::placeholder{color:#858585;opacity:1}
.up{margin-right:4px;border:3px solid transparent;border-bottom:3px solid #777;border-top:0}

.status{display:flex;justify-content:space-between;height:20px}
.layouts{display:flex;align-items:flex-start;gap:3px;color:#b9bdc5}
.layouts a,.layouts button{height:14px;padding:0 8px;background:#2f3441;border-radius:0 0 6px 6px;line-height:14px}
.layouts a{min-width:49px;text-align:center}
.layouts .cur{min-width:46px;background:#3f4656;color:#fff;font-weight:700}
.layouts button{padding:0 6px;font-size:12px}
.cells{display:flex;align-items:stretch;background:#3a4151;color:#fff}
.cells button{display:flex;align-items:center;justify-content:center;font-weight:600}
.cells svg{width:14px;height:14px}
.cells .caret{align-self:center;margin:0 4px;border-width:3px 3px 0}
.w12{width:12px}.w18{width:18px}.w20{width:20px}.w22{width:22px}.w38{width:38px}
.ratio{margin-left:2px}
.gap{border-left:1px solid #1f232c}
.cells .on{background:#5583bd;box-shadow:inset 1px 0 #3a4151}

.badge{position:absolute;left:12px;top:11px;width:104px;height:104px;border-radius:50%;display:grid;place-items:center;background:#002b7d;color:#fff;font:700 40px/40px "Liberation Serif",serif;padding-top:8px;box-shadow:2px 0 2px #0009}
.logo{position:absolute;right:23px;top:6px;width:210px;color:#303fae;font-family:"Liberation Serif",serif;font-weight:700}
.logo-top{display:flex;height:75px;text-shadow:2px 2px 2px #0008}
.logo-c{width:70px;margin-left:-4px;font-size:98px;line-height:72px}
.logo-words{display:flex;flex-direction:column;width:140px;margin-left:4px}
.ivil{display:flex;gap:8px;font-size:42px;line-height:36px;height:38px;padding-left:3px}
.ivil sup{color:#000;font:700 12px/12px "Liberation Sans",sans-serif;margin-left:-8px}
.enter{font-size:40px;line-height:36px}
.strap{background:#2438a8;color:#fff;text-align:center;white-space:nowrap;font:700 12px/14px "DejaVu Sans",sans-serif;font-variant:small-caps;box-shadow:0 1px 2px #0008}
```
